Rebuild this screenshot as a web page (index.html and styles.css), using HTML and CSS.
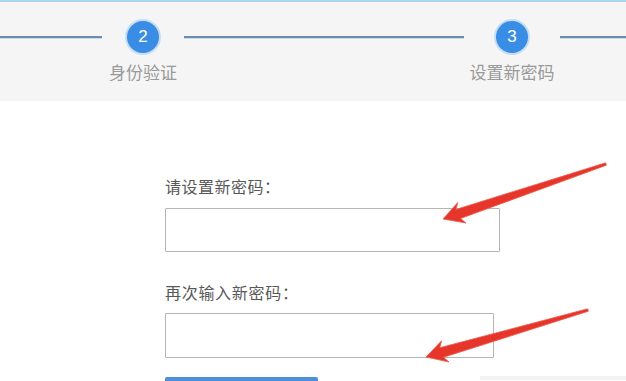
FILE: index.html
```html
<!DOCTYPE html>
<html lang="zh-CN">
<head>
<meta charset="utf-8">
<title>设置新密码</title>
<link rel="stylesheet" href="styles.css">
</head>
<body>
<div class="topline"></div>
<div class="steps">
  <div class="line line-left"></div>
  <div class="step step-2">
    <div class="circle">2</div>
    <div class="step-label">身份验证</div>
  </div>
  <div class="line line-mid"></div>
  <div class="step step-3">
    <div class="circle">3</div>
    <div class="step-label">设置新密码</div>
  </div>
  <div class="line line-right"></div>
</div>
<div class="form">
  <label class="field-label first">请设置新密码：</label>
  <input class="field field-1" type="password">
  <label class="field-label second">再次输入新密码：</label>
  <input class="field field-2" type="password">
  <div class="btn-row">
    <button class="submit" type="button"></button>
    <div class="corner"></div>
  </div>
</div>
<svg class="arrows" width="626" height="381" viewBox="0 0 626 381">
  <polygon class="arrow" points="443,219 466,223 460.5,218.5 606.4,165.2 605.6,162.8 456,209.4 457.8,202.5"/>
  <polygon class="arrow" points="426,357 449,362 443.5,357.3 588.4,311.2 587.6,308.8 439.8,347.7 441.6,340.8"/>
</svg>
</body>
</html>
```
FILE: styles.css
```css
html, body {
  margin: 0;
  padding: 0;
}
body {
  width: 626px;
  height: 381px;
  overflow: hidden;
  background: #ffffff;
  font-family: "Noto Sans CJK SC", "Liberation Sans", sans-serif;
  position: relative;
}
.topline {
  height: 2px;
  background: #acd6ee;
}
.steps {
  height: 99px;
  background: #f5f5f5;
  display: flex;
  align-items: flex-start;
  padding-top: 19px;
  box-sizing: border-box;
}
.line {
  height: 2px;
  margin-top: 15px;
  background: #6c8cb0;
  box-shadow: 0 0.5px 0.5px rgba(108, 140, 176, 0.5);
}
.line-left { width: 102px; }
.line-mid { width: 280px; }
.line-right { flex: 1; }
.step {
  display: flex;
  flex-direction: column;
  align-items: center;
}
.step-2 { width: 82px; }
.step-3 { width: 96px; }
.circle {
  width: 32px;
  height: 32px;
  border-radius: 50%;
  background: #3a8de4;
  box-shadow: 0 0 0 2px rgba(175, 212, 242, 0.7);
  color: #ffffff;
  font-family: "Liberation Sans", "Noto Sans", sans-serif;
  font-size: 17px;
  line-height: 32px;
  text-align: center;
}
.step-label {
  margin-top: 9px;
  font-size: 17px;
  line-height: 20px;
  color: #999999;
  white-space: nowrap;
}
.form {
  display: flex;
  flex-direction: column;
  align-items: flex-start;
  padding-left: 165px;
  padding-top: 75px;
}
.field-label {
  font-size: 16px;
  line-height: 20px;
  letter-spacing: 0.5px;
  color: #585858;
}
.field-label.second {
  margin-top: 30px;
  letter-spacing: 0.7px;
}
.field {
  box-sizing: border-box;
  border: 1px solid #b5b5b5;
  border-radius: 1px;
  background: #ffffff;
  margin: 12px 0 0 0;
  padding: 0;
}
.field-1 {
  width: 335px;
  height: 44px;
}
.field-2 {
  width: 329px;
  height: 45px;
  margin-top: 11px;
}
.btn-row {
  margin-top: 19px;
  width: 461px;
  height: 4px;
  display: flex;
  align-items: flex-start;
  justify-content: space-between;
}
.submit {
  width: 153px;
  height: 4px;
  border: none;
  border-radius: 2px 2px 0 0;
  background: #4d8fd8;
  padding: 0;
}
.corner {
  width: 146px;
  height: 4px;
  margin-top: -1px;
  background: #f3f3f3;
}
.arrows {
  position: absolute;
  left: 0;
  top: 0;
  pointer-events: none;
}
.arrow {
  fill: #e6352b;
  stroke: #ee5a4c;
  stroke-width: 0.8;
  stroke-linejoin: round;
}
```
